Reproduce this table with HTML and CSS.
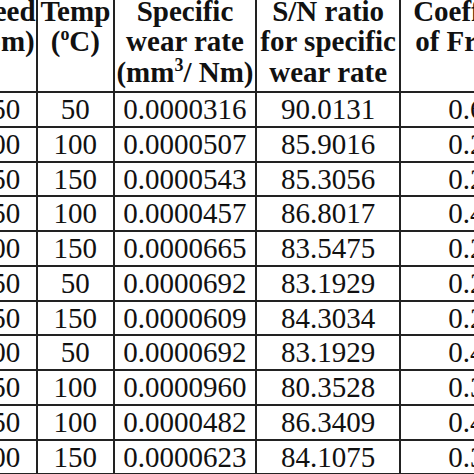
FILE: index.html
```html
<!DOCTYPE html>
<html>
<head>
<meta charset="utf-8">
<link rel="stylesheet" href="styles.css">
</head>
<body>
<div class="frame">
<table class="data">
  <colgroup>
    <col class="c1"><col class="c2"><col class="c3"><col class="c4"><col class="c5">
  </colgroup>
  <thead>
    <tr>
      <th>Speed<br>(rpm)</th>
      <th>Temp<br>(<sup>o</sup>C)</th>
      <th>Specific<br>wear rate<br>(mm<sup>3</sup>/ Nm)</th>
      <th>S/N ratio<br>for specific<br>wear rate</th>
      <th>Coefficient<br>of Friction</th>
    </tr>
  </thead>
  <tbody>
    <tr><td>250</td><td>50</td><td>0.0000316</td><td>90.0131</td><td>0.612</td></tr>
    <tr><td>500</td><td>100</td><td>0.0000507</td><td>85.9016</td><td>0.245</td></tr>
    <tr><td>750</td><td>150</td><td>0.0000543</td><td>85.3056</td><td>0.261</td></tr>
    <tr><td>250</td><td>100</td><td>0.0000457</td><td>86.8017</td><td>0.418</td></tr>
    <tr><td>500</td><td>150</td><td>0.0000665</td><td>83.5475</td><td>0.237</td></tr>
    <tr><td>750</td><td>50</td><td>0.0000692</td><td>83.1929</td><td>0.254</td></tr>
    <tr><td>250</td><td>150</td><td>0.0000609</td><td>84.3034</td><td>0.229</td></tr>
    <tr><td>500</td><td>50</td><td>0.0000692</td><td>83.1929</td><td>0.432</td></tr>
    <tr><td>750</td><td>100</td><td>0.0000960</td><td>80.3528</td><td>0.356</td></tr>
    <tr><td>250</td><td>100</td><td>0.0000482</td><td>86.3409</td><td>0.447</td></tr>
    <tr><td>500</td><td>150</td><td>0.0000623</td><td>84.1075</td><td>0.331</td></tr>
  </tbody>
</table>
</div>
</body>
</html>
```
FILE: styles.css
```css
html, body {
  margin: 0;
  padding: 0;
  background: #ffffff;
}
.frame {
  width: 474px;
  height: 474px;
  overflow: hidden;
  position: relative;
}
.data {
  border-collapse: collapse;
  table-layout: fixed;
  width: 601.6px;
  margin-left: -41px;
  margin-top: -6.5px;
  font-family: "Liberation Serif", "Times New Roman", serif;
  font-size: 29px;
  color: #111;
}
.c1 { width: 77px; }
.c2 { width: 76.7px; }
.c3 { width: 142.6px; }
.c4 { width: 143.7px; }
.c5 { width: 161.6px; }
.data th, .data td {
  border: 2px solid #222;
  text-align: center;
  padding: 0;
  white-space: nowrap;
  overflow: visible;
}
.data th {
  font-weight: bold;
  vertical-align: top;
  line-height: 30.5px;
  padding-bottom: 4.2px;
}
.data td {
  font-weight: normal;
  vertical-align: middle;
  line-height: 32.75px;
}
.data sup {
  font-size: 0.62em;
  line-height: 0;
  vertical-align: 0.62em;
}
```
